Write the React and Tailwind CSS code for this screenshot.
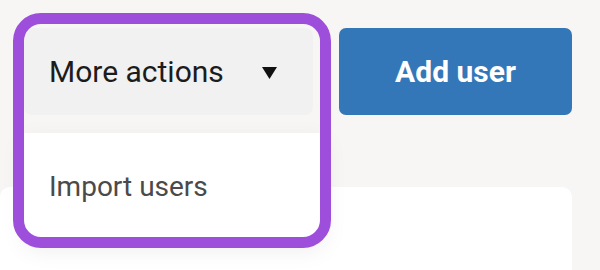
export default function App() {
  return (
    <div
      className="relative w-[600px] h-[270px] overflow-hidden bg-[#f7f6f4]"
      style={{ fontFamily: 'Roboto, "Liberation Sans", sans-serif' }}
    >
      <div className="flex items-start gap-[26px] pl-[24px] pt-[28px]">
        {/* Dropdown */}
        <div className="relative z-10 w-[289px]">
          <button className="flex h-[87px] w-full items-center justify-between rounded-[8px] bg-[#f1f1f1] pl-[25px] pr-[36px] text-[30px] text-[#1c1c1c]">
            <span>More actions</span>
            <svg width="15" height="12" viewBox="0 0 15 12" className="mt-[2px]">
              <path d="M0 0 H15 L7.5 12 Z" fill="#111" />
            </svg>
          </button>

          {/* Menu */}
          <div className="absolute left-0 top-[105px] w-[300px] rounded-b-[14px] bg-white pb-[40px] pt-[40px] shadow-[0_8px_24px_rgba(0,0,0,0.08)]">
            <div className="pl-[25px] text-[28px] leading-none text-[#4a4a4a]">Import users</div>
          </div>
        </div>

        <button className="h-[87px] w-[233px] rounded-[7px] bg-[#3477b9] text-[30px] font-bold text-white">
          Add user
        </button>
      </div>

      {/* Card below */}
      <div className="mt-[72px] mr-[28px] h-[120px] rounded-[10px] bg-white" />

      {/* Highlight ring */}
      <div className="pointer-events-none absolute left-[13px] top-[13px] z-20 h-[235px] w-[318px] rounded-[28px] border-[11px] border-[#9d4fdc]" />
    </div>
  );
}
